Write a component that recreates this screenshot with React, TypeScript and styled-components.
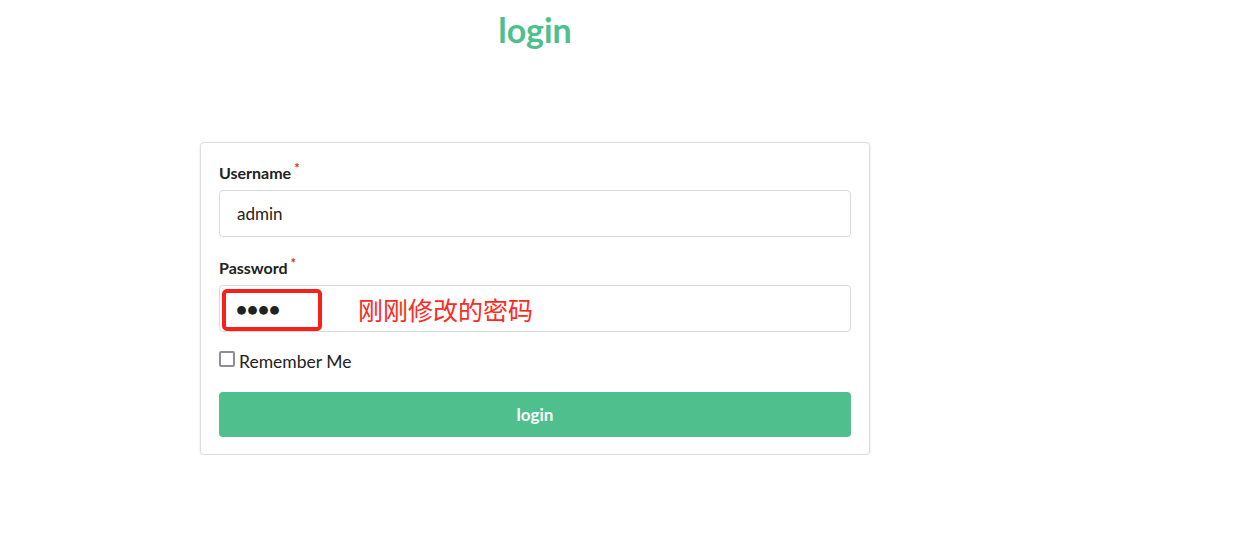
import styled, { createGlobalStyle } from "styled-components";

const GlobalStyle = createGlobalStyle`
    body {
        margin: 0;
        background: #ffffff;
        font-family: Lato, "Noto Sans", sans-serif;
        color: #222;
    }
`

const Pagina = styled.div`
    width: 1070px;
    display: flex;
    flex-direction: column;
    align-items: center;
`

const Titulo = styled.h1`
    margin: 9px 0 0;
    font-size: 34px;
    line-height: 41px;
    font-weight: 700;
    color: #4fc08d;
`

const Cartao = styled.form`
    width: 670px;
    box-sizing: border-box;
    margin-top: 92px;
    padding: 20px 18px 17px;
    border: 1px solid #dcdcdc;
    border-radius: 4px;
    box-shadow: 0 1px 3px rgba(0, 0, 0, 0.1);
    display: flex;
    flex-direction: column;
`

const Grupo = styled.div<{ $espaco?: number }>`
    display: flex;
    flex-direction: column;
    margin-top: ${(p) => p.$espaco ?? 0}px;
`

const Rotulo = styled.label`
    font-size: 16px;
    line-height: 20px;
    font-weight: 700;
    color: #222;
    margin-bottom: 7px;

    sup {
        color: #c0391a;
        font-size: 13px;
        margin-left: 3px;
        vertical-align: 6px;
        line-height: 0;
    }
`

const CampoWrapper = styled.div`
    position: relative;
`

const Campo = styled.input<{ $senha?: boolean }>`
    width: 100%;
    height: 47px;
    box-sizing: border-box;
    padding: 0 ${(p) => (p.$senha ? 16 : 17)}px;
    border: 1px solid #dadada;
    border-radius: 4px;
    font-family: Lato, sans-serif;
    font-size: ${(p) => (p.$senha ? 19 : 17)}px;
    font-weight: ${(p) => (p.$senha ? 900 : 400)};
    color: #222;
    outline: none;
    background: #fff;
`

const Marcacao = styled.div`
    position: absolute;
    left: 3px;
    top: 4px;
    width: 100px;
    height: 42px;
    box-sizing: border-box;
    border: 4px solid #f5211a;
    border-radius: 5px;
    pointer-events: none;
`

const Anotacao = styled.span`
    position: absolute;
    left: 139px;
    top: 8px;
    font-family: "Noto Sans CJK SC", sans-serif;
    font-size: 25px;
    line-height: 32px;
    color: #ff2a22;
    pointer-events: none;
`

const Lembrar = styled.label`
    margin-top: 17px;
    display: flex;
    align-items: center;
    font-size: 17.5px;
    line-height: 26px;
    color: #222;
`

const Caixa = styled.input`
    appearance: none;
    width: 16px;
    height: 16px;
    margin: 0 4px 7px 0;
    border: 2px solid #8c8c9a;
    border-radius: 2px;
    background: #fff;
`

const Botao = styled.button`
    margin-top: 17px;
    height: 45px;
    border: none;
    border-radius: 4px;
    background: #4fc08d;
    color: #fff;
    font-family: Lato, sans-serif;
    font-size: 17px;
    font-weight: 700;
`

const App = () => {
    return (
        <>
            <GlobalStyle />
            <Pagina>
                <Titulo>login</Titulo>
                <Cartao onSubmit={(e) => e.preventDefault()}>
                    <Grupo>
                        <Rotulo>Username<sup>*</sup></Rotulo>
                        <Campo type="text" defaultValue="admin" />
                    </Grupo>
                    <Grupo $espaco={21}>
                        <Rotulo>Password<sup>*</sup></Rotulo>
                        <CampoWrapper>
                            <Campo $senha type="password" defaultValue="1234" />
                            <Marcacao />
                            <Anotacao>刚刚修改的密码</Anotacao>
                        </CampoWrapper>
                    </Grupo>
                    <Lembrar>
                        <Caixa type="checkbox" />
                        Remember Me
                    </Lembrar>
                    <Botao type="submit">login</Botao>
                </Cartao>
            </Pagina>
        </>
    )
}
export default App
